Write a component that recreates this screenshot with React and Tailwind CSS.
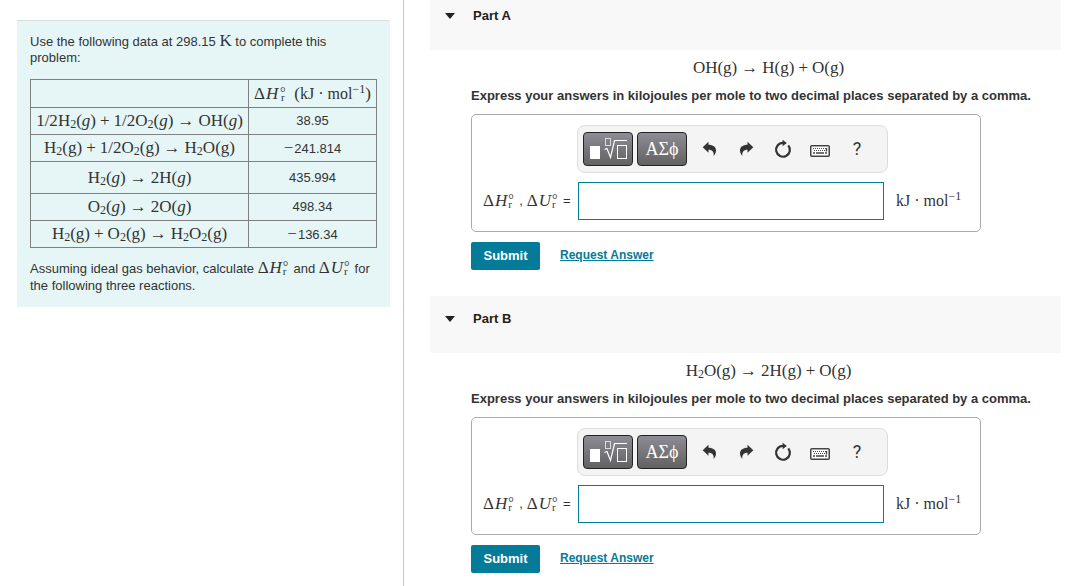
import { useState } from 'react'

const DATA = [
  { reaction: '1/2H2(g) + 1/2O2(g) → OH(g)', value: 38.95, italic: true, height: 'h-[27px]' },
  { reaction: 'H2(g) + 1/2O2(g) → H2O(g)', value: -241.814, italic: false, height: 'h-[27px]' },
  { reaction: 'H2(g) → 2H(g)', value: 435.994, italic: true, height: 'h-[32px]' },
  { reaction: 'O2(g) → 2O(g)', value: 498.34, italic: true, height: 'h-[27px]' },
  { reaction: 'H2(g) + O2(g) → H2O2(g)', value: -136.34, italic: false, height: 'h-[27px]' },
]

const PARTS = [
  { id: 'a', title: 'Part A', reaction: 'OH(g) → H(g) + O(g)' },
  { id: 'b', title: 'Part B', reaction: 'H2O(g) → 2H(g) + O(g)' },
]

// Splits a reaction into subscripts, phases, operators and plain text
function Reaction({ text, italic }) {
  const tokens = text.match(/ [+→] |\(g\)|[HO]|\d+(\/\d+)?/g)
  return (
    <span className="whitespace-nowrap font-['Liberation_Serif',serif] text-[17px] leading-5">
      {tokens.map((token, i) => {
        const prev = tokens[i - 1]
        if (token === ' → ') {
          return <span key={i} className="mx-1">→</span>
        }
        if (token === ' + ') {
          return <span key={i} className="mx-1">+</span>
        }
        if (token === '(g)') {
          return <span key={i}>({italic ? <i>g</i> : 'g'})</span>
        }
        if (/^\d$/.test(token) && (prev === 'H' || prev === 'O')) {
          return <sub key={i} className="bottom-[-2px] text-[12px]">{token}</sub>
        }
        return <span key={i}>{token}</span>
      })}
    </span>
  )
}

function Delta({ symbol }) {
  return (
    <span className="inline-flex h-4 items-center whitespace-nowrap font-['Liberation_Serif',serif] text-[17px] leading-4">
      Δ<i className="ml-px">{symbol}</i>
      <span className="ml-px flex w-[7px] flex-col pt-[2px] text-[11px] leading-[4px]">
        <span className="text-[14px]">°</span>
        <span>r</span>
      </span>
    </span>
  )
}

function Unit() {
  return (
    <span className="whitespace-nowrap font-['Liberation_Serif',serif] text-[16px] leading-4">
      kJ · mol<sup className="top-[-6px] text-[12px]">−1</sup>
    </span>
  )
}

function DataPanel() {
  return (
    <div className="border-t border-[#dcdcdc] bg-[#e6f6f6] px-[13px] pt-3 pb-[13px]">
      <p className="leading-4">
        Use the following data at 298.15{' '}
        <span className="font-['Liberation_Serif',serif] text-[17px] leading-4">K</span> to complete this problem:
      </p>
      <table className="mt-[13px] w-full border-collapse text-center">
        <thead>
          <tr className="h-7">
            <th className="border border-[#808080]"></th>
            <th className="w-[128px] border border-[#808080] font-normal">
              <span className="flex items-center justify-center font-['Liberation_Serif',serif] text-[17px] leading-5">
                <Delta symbol="H" />
                <span className="ml-2">(</span>
                <Unit />
                <span>)</span>
              </span>
            </th>
          </tr>
        </thead>
        <tbody>
          {DATA.map((row) => (
            <tr key={row.reaction} className={row.height}>
              <td className="border border-[#808080]">
                <Reaction text={row.reaction} italic={row.italic} />
              </td>
              <td className="border border-[#808080]">
                {row.value < 0 && (
                  <span className="mr-px font-['Liberation_Serif',serif] text-[17px] leading-4">−</span>
                )}
                {Math.abs(row.value)}
              </td>
            </tr>
          ))}
        </tbody>
      </table>
      <p className="mt-3 leading-[17px]">
        Assuming ideal gas behavior, calculate <Delta symbol="H" /> and <Delta symbol="U" /> for the following three
        reactions.
      </p>
    </div>
  )
}

function UndoIcon() {
  return (
    <svg width="15" height="16" viewBox="0 0 15 16" fill="#333">
      <path d="M.7 6.2 6.5.7v3.1C11 3.8 14 6 14 9.5c0 2.2-1 4-2.400 5.500.6-3.500-1-6.200-5.100-6.200v2.900z" />
    </svg>
  )
}

function RedoIcon() {
  return (
    <svg width="15" height="16" viewBox="0 0 15 16" fill="#333">
      <path d="M14.300 6.200 8.500.7v3.100C4 3.800 1 6 1 9.500c0 2.200 1 4 2.400 5.500-.6-3.500 1-6.200 5.100-6.200v2.900z" />
    </svg>
  )
}

function ResetIcon() {
  return (
    <svg width="18" height="20" viewBox="0 0 18 20">
      <path d="M14.300 6.400A6.900 6.900 0 1 1 9 3.900" fill="none" stroke="#333" strokeWidth="2.200" />
      <path d="M8.600.8 12.800 4 8.600 7.200z" fill="#333" />
    </svg>
  )
}

function KeyboardIcon() {
  return (
    <svg width="20" height="12" viewBox="0 0 20 12">
      <rect x=".75" y=".75" width="18.500" height="10.500" rx="1" fill="#fff" stroke="#444" strokeWidth="1.500" />
      <path d="M3 3.500h14M4 5.500h13" stroke="#444" strokeWidth="1" strokeDasharray="1 1" />
      <path d="M3 8h2M6 8h8M15 8h2M16.500 3v3.500" stroke="#444" strokeWidth="1.400" />
    </svg>
  )
}

function TemplatesIcon() {
  return (
    <svg width="38" height="24" viewBox="0 0 38 24" fill="none" stroke="#fff">
      <rect x="1" y="9" width="10" height="13" fill="#fff" stroke="none" />
      <rect x="16.500" y="1.500" width="5" height="7" stroke="#ddd" />
      <path d="M15.500 12.500 18 11.500 21.500 20.500 25.500 3.500H38" strokeWidth="1.200" />
      <rect x="28.500" y="8.500" width="9" height="13" />
    </svg>
  )
}

const DARK_BUTTON =
  'flex h-[34px] w-[50px] items-center justify-center rounded border border-[#222] bg-linear-to-b from-[#8e8c95] to-[#626262] text-white'
const TOOL_BUTTON = 'flex h-[34px] w-[37px] items-center justify-center pr-px'

function Toolbar() {
  return (
    <div className="flex h-12 w-[311px] items-center gap-1 rounded-lg border border-[#ddd] bg-[#f4f4f4] px-[5px]">
      <button type="button" aria-label="Templates" className={DARK_BUTTON}>
        <TemplatesIcon />
      </button>
      <button type="button" className={DARK_BUTTON}>
        <span className="font-['Liberation_Serif',serif] text-[18px] leading-5">ΑΣϕ</span>
      </button>
      <div className="flex">
        <button type="button" aria-label="Undo" className={TOOL_BUTTON}>
          <UndoIcon />
        </button>
        <button type="button" aria-label="Redo" className={TOOL_BUTTON}>
          <RedoIcon />
        </button>
        <button type="button" aria-label="Reset" className={TOOL_BUTTON}>
          <ResetIcon />
        </button>
        <button type="button" aria-label="Keyboard shortcuts" className={`${TOOL_BUTTON} pt-1`}>
          <KeyboardIcon />
        </button>
        <button type="button" className={`${TOOL_BUTTON} font-[Roboto,sans-serif] text-[18px] text-[#333]`}>
          ?
        </button>
      </div>
    </div>
  )
}

function Part({ id, title, reaction }) {
  const [open, setOpen] = useState(true)
  const [answer, setAnswer] = useState('')

  return (
    <section className="pb-[26px]">
      <h2 className="mr-[5px] h-[57px] bg-[#f8f8f8] pt-[15px] pl-[15px]">
        <button type="button" onClick={() => setOpen(!open)} className="flex items-center font-bold text-[#222]">
          <svg width="10" height="6" viewBox="0 0 10 6" fill="#222" className="mr-[18px]">
            <path d="M0 0h10L5 6z" />
          </svg>
          {title}
        </button>
      </h2>
      {open && (
        <form onSubmit={(e) => e.preventDefault()} className="pl-[41px]">
          <p className="pt-2 text-center leading-5">
            <Reaction text={reaction} />
          </p>
          <p className="pt-[7px] leading-5 font-bold">
            Express your answers in kilojoules per mole to two decimal places separated by a comma.
          </p>
          <div className="mt-2 h-[118px] max-w-[510px] rounded-[5px] border border-[#aaa] pt-[10px] pl-[11px]">
            <div className="pl-[94px]">
              <Toolbar />
            </div>
            <div className="mt-[9px] flex items-center">
              <label htmlFor={`answer-${id}`} className="flex w-[95px] items-center">
                <Delta symbol="H" />
                <span className="mx-1">,</span>
                <Delta symbol="U" />
                <span className="ml-1">=</span>
              </label>
              <input
                id={`answer-${id}`}
                type="text"
                value={answer}
                onChange={(e) => setAnswer(e.target.value)}
                className="mr-3 h-[38px] w-[306px] border border-[#047b99] bg-white px-2 outline-none"
              />
              <Unit />
            </div>
          </div>
          <div className="mt-[10px] flex items-center">
            <button type="submit" className="h-7 w-[69px] rounded-xs bg-[#047b99] font-bold text-white">
              Submit
            </button>
            <a href="#request" className="ml-5 pb-[3px] text-[12px] font-bold text-[#047b99] underline">
              Request Answer
            </a>
          </div>
        </form>
      )}
    </section>
  )
}

function App() {
  return (
    <div className="flex h-screen overflow-hidden bg-white font-['Liberation_Sans',Arial,sans-serif] text-[13px] leading-4 text-[#333]">
      <aside className="w-[404px] shrink-0 border-r border-[#c4c8d0] pt-5 pr-[13px] pl-[17px]">
        <DataPanel />
      </aside>
      <main className="-mt-[7px] flex-1 pl-[26px]">
        {PARTS.map((part) => (
          <Part key={part.id} {...part} />
        ))}
      </main>
    </div>
  )
}

export default App
